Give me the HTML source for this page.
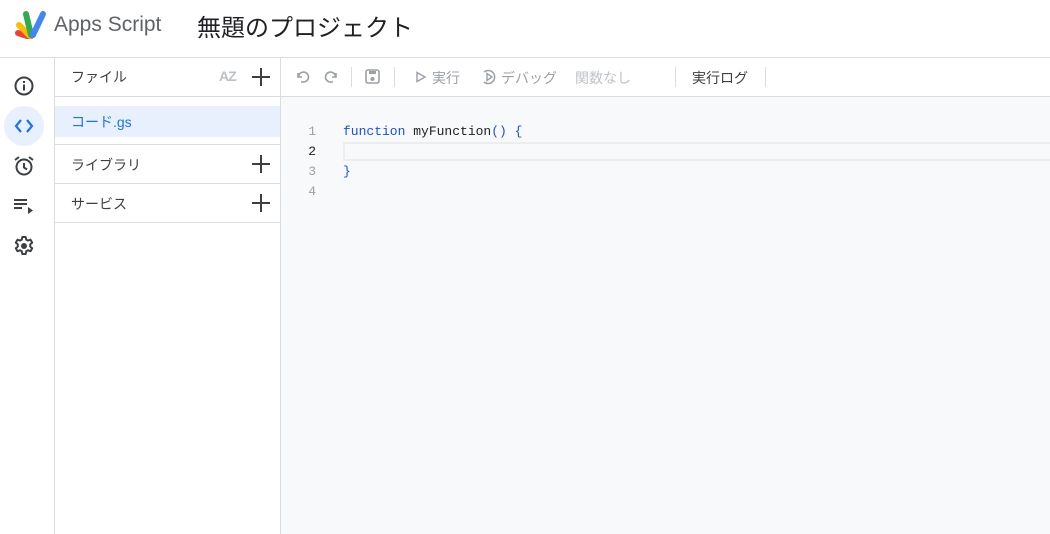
<!DOCTYPE html>
<html><head><meta charset="utf-8"><style>
*{box-sizing:border-box;margin:0;padding:0}
body{width:1050px;height:534px;overflow:hidden;background:#fff;font-family:"Liberation Sans","Noto Sans CJK JP",sans-serif;color:#3c4043;position:relative}
.abs{position:absolute}
.hl{border-bottom:1px solid #dadce0}
.jp{font-size:14px;color:#3c4043}
.mono{font-family:"Liberation Mono","DejaVu Sans Mono",monospace;font-size:13px}
</style></head><body>
<div class="abs" style="left:0;top:0;width:1050px;height:58px;border-bottom:1px solid #dadce0"></div>
<svg class="abs" style="left:15px;top:9px" width="34" height="30" viewBox="0 0 34 30">
<path d="M3 24L15 28" stroke="#ea4335" stroke-width="6" stroke-linecap="round"/>
<path d="M4 16L15 27" stroke="#fbbc04" stroke-width="6" stroke-linecap="round"/>
<path d="M11 5L16 26" stroke="#34a853" stroke-width="6" stroke-linecap="round"/>
<path d="M28 5L18 26" stroke="#4285f4" stroke-width="6" stroke-linecap="round"/>
</svg>
<div class="abs" style="left:54px;top:13px;font-size:21px;color:#5f6368">Apps Script</div>
<div class="abs" style="left:197px;top:8px;font-size:24px;color:#202124">無題のプロジェクト</div>
<div class="abs" style="left:54px;top:58px;width:1px;height:476px;background:#dadce0"></div>
<svg class="abs" style="left:13px;top:75px" width="22" height="22" viewBox="0 0 22 22"><circle cx="11" cy="11" r="8.5" fill="none" stroke="#3c4043" stroke-width="2"/><rect x="10" y="9.5" width="2" height="6" fill="#3c4043"/><rect x="10" y="6" width="2" height="2" fill="#3c4043"/></svg>
<div class="abs" style="left:4px;top:106px;width:40px;height:40px;border-radius:20px;background:#e8f0fe"></div>
<svg class="abs" style="left:13px;top:116px" width="22" height="20" viewBox="0 0 22 20"><path d="M8 4L3 10l5 6M14 4l5 6-5 6" fill="none" stroke="#1a73e8" stroke-width="2.2"/></svg>
<svg class="abs" style="left:13px;top:155px" width="22" height="22" viewBox="0 0 22 22"><circle cx="11" cy="12" r="7.5" fill="none" stroke="#3c4043" stroke-width="2"/><path d="M11 8v4.5l3 2M2 5l4-3M20 5l-4-3" fill="none" stroke="#3c4043" stroke-width="2"/></svg>
<svg class="abs" style="left:13px;top:197px" width="24" height="20" viewBox="0 0 24 20"><path d="M1 3h13M1 7h13M1 11h8" stroke="#3c4043" stroke-width="2"/><path d="M15 10l5 3.5-5 3.5z" fill="#3c4043"/></svg>
<svg class="abs" style="left:13px;top:235px" width="22" height="22" viewBox="0 0 22 22">
<g fill="none" stroke="#3c4043" stroke-width="2">
<path d="M9.3 2h3.4l.5 2.6 1.8 1 2.5-.9 1.7 2.9-2 1.8v2.1l2 1.8-1.7 2.9-2.5-.9-1.8 1-.5 2.7H9.3l-.5-2.7-1.8-1-2.5.9-1.7-2.9 2-1.8V9.4l-2-1.8 1.7-2.9 2.5.9 1.8-1z" stroke-linejoin="round"/>
</g><circle cx="11" cy="11" r="3" fill="#3c4043"/></svg>
<div class="abs" style="left:280px;top:58px;width:1px;height:476px;background:#dadce0"></div>
<div class="abs hl" style="left:55px;top:58px;width:225px;height:39px"></div>
<div class="abs jp" style="left:71px;top:67px">ファイル</div>
<div class="abs" style="left:219px;top:68px;font-size:14px;font-weight:bold;color:#bdc1c6;letter-spacing:-1px">AZ</div>
<svg class="abs" style="left:251px;top:67px" width="20" height="20" viewBox="0 0 20 20"><path d="M10 1v18M1 10h18" stroke="#3c4043" stroke-width="2"/></svg>
<div class="abs" style="left:55px;top:106px;width:225px;height:31px;background:#e8f0fe"></div>
<div class="abs" style="left:71px;top:112px;font-size:14px;color:#1a73e8">コード.gs</div>
<div class="abs hl" style="left:55px;top:144px;width:225px;height:1px"></div>
<div class="abs jp" style="left:71px;top:155px">ライブラリ</div>
<svg class="abs" style="left:251px;top:154px" width="20" height="20" viewBox="0 0 20 20"><path d="M10 1v18M1 10h18" stroke="#3c4043" stroke-width="2"/></svg>
<div class="abs hl" style="left:55px;top:183px;width:225px;height:1px"></div>
<div class="abs jp" style="left:71px;top:194px">サービス</div>
<svg class="abs" style="left:251px;top:193px" width="20" height="20" viewBox="0 0 20 20"><path d="M10 1v18M1 10h18" stroke="#3c4043" stroke-width="2"/></svg>
<div class="abs hl" style="left:55px;top:222px;width:225px;height:1px"></div>
<div class="abs hl" style="left:281px;top:58px;width:769px;height:39px"></div>
<div class="abs" style="left:281px;top:97px;width:769px;height:437px;background:#f8f9fa"></div>
<svg class="abs" style="left:294px;top:68px" width="46" height="18" viewBox="0 0 46 18"><path d="M4 5v4h4M4.5 8.5A5 5 0 1 1 9 14h-2" fill="none" stroke="#9aa0a6" stroke-width="1.6"/><path d="M42 5v4h-4M41.5 8.5A5 5 0 1 0 37 14h2" fill="none" stroke="#9aa0a6" stroke-width="1.6"/></svg>
<div class="abs" style="left:351px;top:67px;width:1px;height:20px;background:#dadce0"></div>
<svg class="abs" style="left:364px;top:68px" width="18" height="18" viewBox="0 0 18 18"><rect x="2" y="2" width="13" height="13" rx="2" fill="none" stroke="#9aa0a6" stroke-width="1.6"/><rect x="5" y="3" width="7" height="3" fill="#9aa0a6"/><circle cx="8.5" cy="11" r="2" fill="#9aa0a6"/></svg>
<div class="abs" style="left:394px;top:67px;width:1px;height:20px;background:#dadce0"></div>
<svg class="abs" style="left:415px;top:71px" width="12" height="12" viewBox="0 0 12 12"><path d="M2 1.5l8 4.5-8 4.5z" fill="none" stroke="#9aa0a6" stroke-width="1.4"/></svg>
<div class="abs" style="left:432px;top:68px;font-size:14px;color:#9aa0a6">実行</div>
<svg class="abs" style="left:480px;top:68px" width="18" height="18" viewBox="0 0 18 18"><path d="M4 4A6.5 6.5 0 1 1 4 14" fill="none" stroke="#9aa0a6" stroke-width="1.5"/><path d="M7 5.5l5 3.5-5 3.5z" fill="none" stroke="#9aa0a6" stroke-width="1.4"/></svg>
<div class="abs" style="left:501px;top:68px;font-size:14px;color:#9aa0a6">デバッグ</div>
<div class="abs" style="left:575px;top:68px;font-size:14px;color:#bdc1c6">関数なし</div>
<div class="abs" style="left:675px;top:67px;width:1px;height:20px;background:#dadce0"></div>
<div class="abs" style="left:692px;top:68px;font-size:14px;color:#3c4043">実行ログ</div>
<div class="abs" style="left:765px;top:67px;width:1px;height:20px;background:#dadce0"></div>
<div class="abs" style="left:343px;top:142px;width:707px;height:19px;border:2px solid #ebedef;border-right:none"></div>
<div class="abs mono" style="left:300px;top:122px;width:16px;text-align:right;line-height:20px;color:#9aa0a6">1<br><span style="color:#202124">2</span><br>3<br>4</div>
<div class="abs mono" style="left:343px;top:122px;line-height:20px;color:#202124;white-space:pre"><span style="color:#1a4fd6">function</span> myFunction<span style="color:#1a4fd6">() {</span>

<span style="color:#1a4fd6">}</span></div>
</body></html>
